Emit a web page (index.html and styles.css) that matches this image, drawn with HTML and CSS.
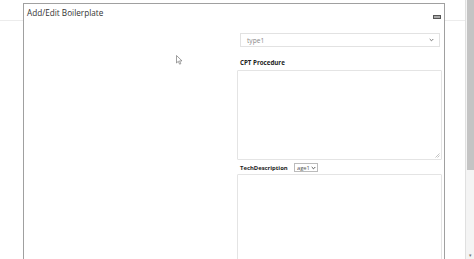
FILE: index.html
```html
<!DOCTYPE html>
<html>
<head>
<meta charset="utf-8">
<link rel="stylesheet" href="styles.css">
</head>
<body>
<div class="page">
  <div class="page-header"></div>
  <div class="dialog">
    <div class="titlebar">
      <span class="title">Add/Edit Boilerplate</span>
      <span class="minimize"></span>
    </div>
    <div class="dialog-body">
      <div class="left-col"></div>
      <div class="right-col">
        <div class="select type-select">
          <span>type1</span>
          <svg class="chev" width="5" height="4" viewBox="0 0 5 4"><path d="M0.7 1 L2.5 2.8 L4.3 1" fill="none" stroke="#666" stroke-width="0.9"/></svg>
        </div>
        <div class="label cpt-label">CPT Procedure</div>
        <div class="textarea cpt-area">
          <svg class="grip" width="5" height="5" viewBox="0 0 5 5"><path d="M4.5 0.5 L0.5 4.5 M4.5 2.5 L2.5 4.5" stroke="#aaa" stroke-width="0.7"/></svg>
        </div>
        <div class="tech-row">
          <span class="label tech-label">TechDescription</span>
          <span class="small-select"><span>age1</span><svg width="5" height="4" viewBox="0 0 5 4"><path d="M0.7 1 L2.5 2.8 L4.3 1" fill="none" stroke="#444" stroke-width="0.9"/></svg></span>
        </div>
        <div class="textarea tech-area"></div>
      </div>
    </div>
  </div>
  <svg class="cursor" width="7" height="10" viewBox="0 0 7 10"><path d="M0.5 0.5 L0.5 8 L2.3 6.3 L3.6 9.2 L4.8 8.7 L3.6 5.9 L6 5.9 Z" fill="#fff" stroke="#777" stroke-width="0.7"/></svg>
</div>
<div class="scrollbar">
  <div class="thumb"></div>
  <div class="track"></div>
  <div class="arrow">&#9662;</div>
</div>
</body>
</html>
```
FILE: styles.css
```css
html, body {
  margin: 0;
  padding: 0;
}
body {
  width: 474px;
  height: 259px;
  overflow: hidden;
  display: flex;
  background: #fff;
  font-family: "Open Sans", "Noto Sans", sans-serif;
  color: #333;
}
.page {
  flex: 1;
  position: relative;
  overflow: hidden;
}
.page-header {
  height: 20px;
  border-bottom: 1px solid #ececec;
}
.dialog {
  position: absolute;
  left: 23px;
  top: 3px;
  width: 420px;
  height: 300px;
  border: 1px solid #a0a0a0;
  background: #fff;
}
.titlebar {
  height: 26px;
  display: flex;
  align-items: flex-start;
  justify-content: space-between;
  padding: 0 2px 0 3px;
}
.title {
  font-size: 8.2px;
  line-height: 11px;
  margin-top: 3px;
  color: #333;
}
.minimize {
  width: 6px;
  height: 2px;
  margin-top: 11px;
  margin-right: 1px;
  background: #aaa;
  border: 1px solid #555;
}
.dialog-body {
  display: grid;
  grid-template-columns: 213px 205px;
}
.right-col {
  display: flex;
  flex-direction: column;
}
.select {
  box-sizing: border-box;
  height: 14px;
  border: 1px solid #e2e2e2;
  display: flex;
  align-items: center;
  justify-content: space-between;
  padding: 0 5px 0 6px;
  font-size: 6.6px;
  color: #888;
}
.type-select {
  margin: 3px 2px 0 3px;
}
.chev {
  display: block;
}
.label {
  font-size: 6.2px;
  font-weight: 700;
  color: #222;
}
.cpt-label {
  margin: 12px 0 0 3px;
  line-height: 8px;
}
.textarea {
  box-sizing: border-box;
  border: 1px solid #e4e4e4;
  border-radius: 1px;
  position: relative;
}
.cpt-area {
  height: 90px;
  margin-top: 3px;
}
.grip {
  position: absolute;
  right: 1px;
  bottom: 1px;
  display: block;
}
.tech-row {
  display: flex;
  align-items: center;
  height: 9px;
  margin-top: 3px;
  padding-left: 3px;
}
.tech-label {
  font-size: 5.9px;
  width: 54px;
  flex: none;
}
.small-select {
  box-sizing: border-box;
  display: flex;
  align-items: center;
  gap: 1px;
  height: 9px;
  border: 1px solid #bbb;
  padding: 0 1px 0 2px;
  font-size: 5.8px;
  color: #555;
  white-space: nowrap;
}
.small-select svg {
  display: block;
}
.tech-area {
  height: 100px;
  margin-top: 2px;
}
.cursor {
  position: absolute;
  left: 176px;
  top: 55px;
}
.scrollbar {
  width: 8px;
  display: flex;
  flex-direction: column;
  background: #f4f4f4;
  border-left: 1px solid #e0e0e0;
}
.thumb {
  height: 170px;
  background: #c4c4c4;
  margin: 0 0 0 1px;
}
.track {
  flex: 1;
}
.arrow {
  height: 7px;
  font-size: 5px;
  line-height: 7px;
  text-align: center;
  color: #777;
}
```
